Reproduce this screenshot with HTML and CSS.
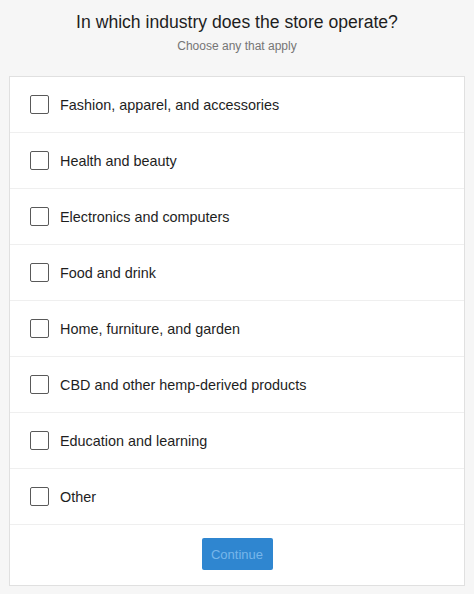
FILE: index.html
```html
<!DOCTYPE html>
<html lang="en">
<head>
    <meta charset="UTF-8">
    <meta name="viewport" content="width=device-width, initial-scale=1.0">
    <title>Store industry</title>
    <link rel="stylesheet" href="styles.css">
</head>
<body>
    <section class="step">
        <header class="step-head">
            <h1 class="title">In which industry does the store operate?</h1>
            <p class="subtitle">Choose any that apply</p>
        </header>
        <section class="card">
            <label class="option"><input type="checkbox" class="check"><span>Fashion, apparel, and accessories</span></label>
            <label class="option"><input type="checkbox" class="check"><span>Health and beauty</span></label>
            <label class="option"><input type="checkbox" class="check"><span>Electronics and computers</span></label>
            <label class="option"><input type="checkbox" class="check"><span>Food and drink</span></label>
            <label class="option"><input type="checkbox" class="check"><span>Home, furniture, and garden</span></label>
            <label class="option"><input type="checkbox" class="check"><span>CBD and other hemp-derived products</span></label>
            <label class="option"><input type="checkbox" class="check"><span>Education and learning</span></label>
            <label class="option"><input type="checkbox" class="check"><span>Other</span></label>
            <footer class="card-foot">
                <button class="continue" disabled>Continue</button>
            </footer>
        </section>
    </section>
</body>
</html>
```

FILE: styles.css
```css
*{margin: 0; padding: 0; box-sizing: border-box;}
body{
    background: #f6f6f6;
    font-family: "Liberation Sans", Arial, Helvetica, sans-serif;
    color: #1e1e1e;}
.step{padding: 0 9px 8px 9px;}
.step-head{
    height: 76px; display: flex; flex-direction: column;
    align-items: center; padding-top: 11px;}
.title{font-size: 17.6px; font-weight: 400; line-height: 22px; color: #1e1e1e;}
.subtitle{font-size: 12px; line-height: 16px; margin-top: 5px; color: #757575;}
.card{
    background: #fff; border: 1px solid #e0e0e0;
    display: flex; flex-direction: column;}
.option{
    height: 56px; display: flex; align-items: center;
    padding-left: 20px; border-bottom: 1px solid #efefef;
    font-size: 14.4px; cursor: pointer;}
.check{
    appearance: none; -webkit-appearance: none;
    width: 19px; height: 19px; border: 1.5px solid #595959;
    border-radius: 2px; background: #fff; margin-right: 11px;}
.card-foot{
    display: flex; justify-content: center;
    padding: 13px 0 15px 0;}
.continue{
    width: 71px; height: 32px; border: none; border-radius: 2px;
    background: #2f86d0; color: #77b6ea;
    font-family: inherit; font-size: 13px;}
```
